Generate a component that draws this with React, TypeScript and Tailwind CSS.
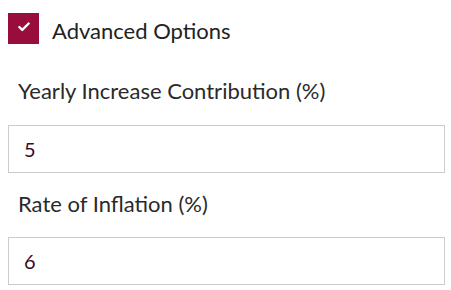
import { Check } from 'lucide-react';

export default function App() {
  return (
    <div className="w-[451px] h-[290px] bg-white pl-2 pr-[6px] pt-[13px] font-['Lato',sans-serif] overflow-hidden">
      {/* Advanced toggle */}
      <label className="flex items-center gap-[13px] h-[31px]">
        <span className="flex items-center justify-center w-[31px] h-[31px] bg-[#990d3d] pb-[3px]">
          <Check className="w-[14px] h-[14px] text-white" strokeWidth={4} />
        </span>
        <span className="text-[22px] text-[#222] leading-none pt-[5px]">Advanced Options</span>
      </label>

      <div className="pl-[10px] mt-[33px] text-[22px] leading-[28px] text-[#2a2a2a]">
        Yearly Increase Contribution (%)
      </div>
      <div className="mt-[20px] h-[48px] border border-[#cccccc] flex items-center pl-[15px] text-[20px] text-[#3d0a20]">
        5
      </div>

      <div className="pl-[10px] mt-[17px] text-[22px] leading-[28px] text-[#2a2a2a]">
        Rate of Inflation (%)
      </div>
      <div className="mt-[19px] h-[48px] border border-[#cccccc] flex items-center pl-[15px] text-[20px] text-[#3d0a20]">
        6
      </div>
    </div>
  );
}
